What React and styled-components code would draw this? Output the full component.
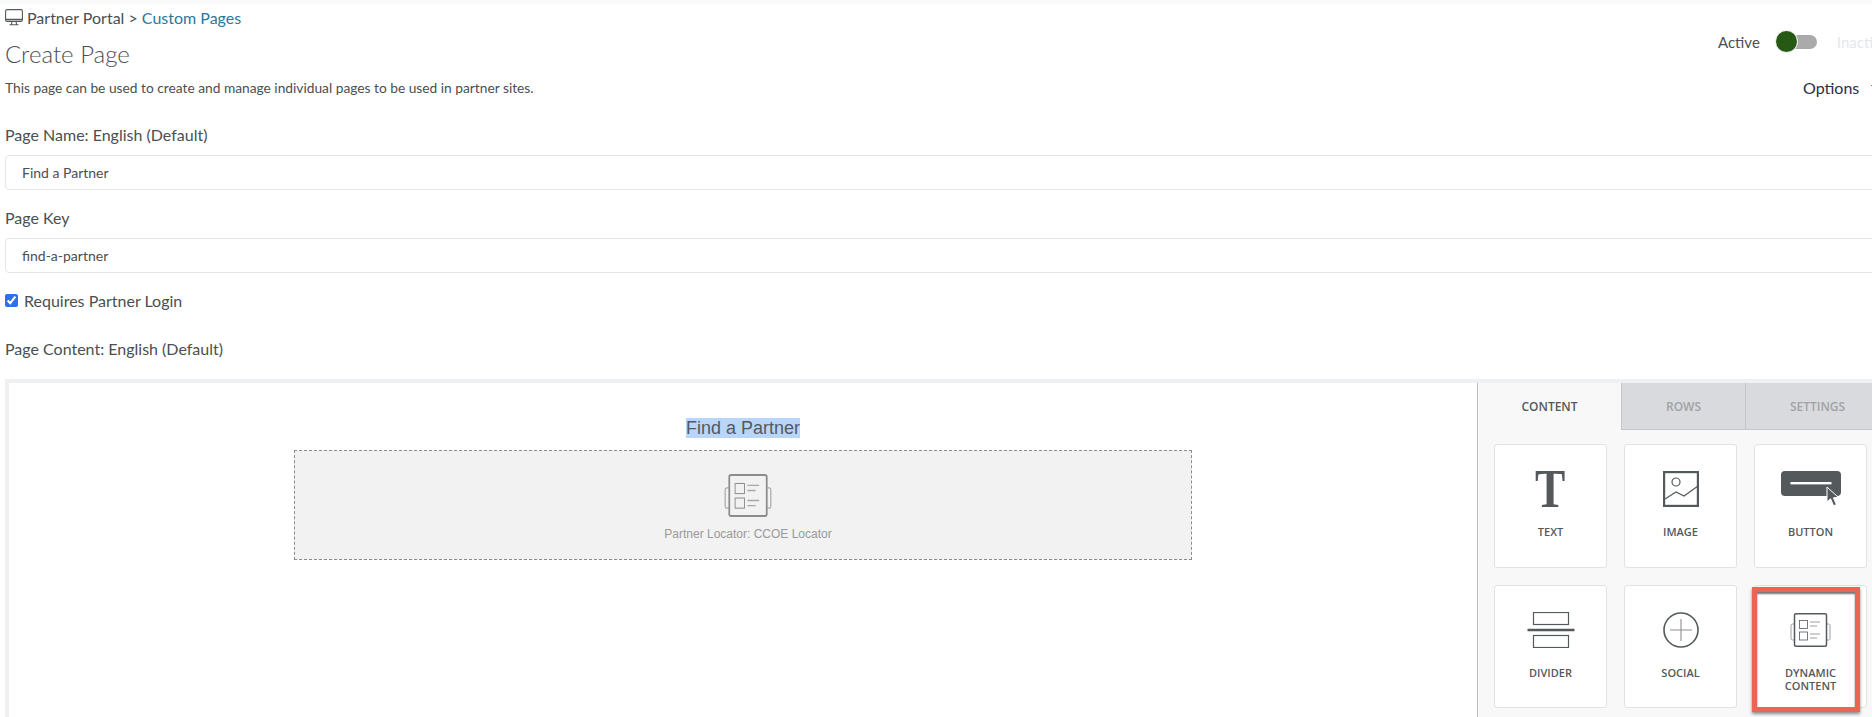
import React from "react";
import styled, { createGlobalStyle } from "styled-components";

const GlobalStyle = createGlobalStyle`
  html, body {
    margin: 0;
    height: 717px;
    overflow: hidden;
    background: #fff;
  }
  * {
    box-sizing: border-box;
  }
`;

const Page = styled.div`
  width: 1930px;
  height: 717px;
  overflow: hidden;
  font-family: Lato, "Liberation Sans", sans-serif;
  color: #4a4f52;
`;

const TopStrip = styled.div`
  height: 4px;
  background: #f9f9f9;
`;

const Main = styled.div`
  padding-left: 5px;
`;

const Header = styled.header`
  display: flex;
  justify-content: space-between;
  height: 121px;
`;

const Breadcrumb = styled.div`
  display: flex;
  align-items: center;
  gap: 4px;
  height: 24px;
  margin-top: 1px;
  font-size: 16px;
  white-space: pre;
`;

const CrumbLink = styled.a`
  color: #2a789f;
`;

const Title = styled.h1`
  margin: 10px 0 0;
  font-size: 24px;
  line-height: 30px;
  font-weight: 300;
  color: #4a4f52;
`;

const Description = styled.p`
  margin: 10px 0 0;
  font-size: 13.75px;
  line-height: 18px;
`;

const HeaderRight = styled.div`
  display: flex;
  flex-direction: column;
  align-items: flex-start;
  width: 212px;
  padding-top: 25px;
`;

const Status = styled.div`
  display: flex;
  align-items: center;
  height: 26px;
  font-size: 15px;
`;

const Toggle = styled.span`
  position: relative;
  display: block;
  width: 41px;
  height: 14px;
  margin: 0 20px 0 16px;
  border-radius: 7px;
  background: #aaa;
  &::before {
    content: "";
    position: absolute;
    left: 0;
    top: -4px;
    width: 21px;
    height: 21px;
    border-radius: 50%;
    background: #265a14;
    box-shadow: 0 0 0 1px #eee;
  }
`;

const InactiveText = styled.span`
  color: #e2e8ee;
`;

const Options = styled.div`
  display: flex;
  align-items: center;
  gap: 12px;
  margin: 23px 0 0 85px;
  font-size: 16px;
  color: #2b2f45;
`;

const Caret = styled.span`
  width: 0;
  height: 0;
  border-left: 4px solid transparent;
  border-right: 4px solid transparent;
  border-top: 5px solid #2b2f45;
`;

const FieldLabel = styled.label`
  display: block;
  font-size: 16px;
  line-height: 20px;
  margin-bottom: 10px;
`;

const TextInput = styled.input`
  display: block;
  width: 100%;
  height: 35px;
  padding: 0 16px;
  margin-bottom: ${(p) => p.$gap}px;
  border: 1px solid #e2e6e8;
  border-radius: 4px;
  background: #fff;
  font: 14px Lato, "Liberation Sans", sans-serif;
  color: #4a4f52;
  outline: none;
`;

const CheckRow = styled.label`
  display: flex;
  align-items: center;
  gap: 6px;
  height: 20px;
  margin: -2px 0 29px;
  font-size: 16px;
`;

const CheckBox = styled.input`
  width: 13px;
  height: 13px;
  margin: 1px 0 0;
  accent-color: #2f6fed;
`;

const Editor = styled.section`
  display: flex;
  height: 345px;
  margin-top: 20px;
  border: 4px solid #eef0f1;
  border-bottom: 0;
  border-right: 0;
`;

const Canvas = styled.div`
  width: 1468px;
  flex: none;
  display: flex;
  flex-direction: column;
  align-items: center;
  padding-top: 35px;
  font-family: "Liberation Sans", Arial, sans-serif;
`;

const CanvasTitle = styled.div`
  font-size: 18px;
  line-height: 20px;
  color: #54595c;
  background: #b9d6f9;
`;

const LocatorBlock = styled.div`
  display: flex;
  flex-direction: column;
  align-items: center;
  width: 898px;
  height: 110px;
  margin-top: 12px;
  padding: 23px 0 0 10px;
  border: 1px dashed #8c8c8c;
  background: #f2f2f2;
`;

const LocatorText = styled.div`
  margin-top: 10px;
  font-size: 12px;
  line-height: 14px;
  color: #999;
`;

const Sidebar = styled.aside`
  width: 412px;
  flex: none;
  border-left: 1px solid #bdbdbd;
  background: #f8f8f8;
`;

const Tabs = styled.div`
  display: flex;
  height: 47px;
`;

const Tab = styled.div`
  display: flex;
  align-items: center;
  justify-content: center;
  width: ${(p) => p.$width}px;
  font: 600 12px "Open Sans", sans-serif;
  color: ${(p) => (p.$active ? "#54595c" : "#a0a3a6")};
  background: ${(p) => (p.$active ? "transparent" : "#d8dade")};
  border-bottom: ${(p) => (p.$active ? "0" : "1px solid #c4c6c9")};
  border-left: ${(p) => (p.$active ? "0" : "1px solid #c4c6c9")};
`;

const CardGrid = styled.div`
  display: grid;
  grid-template-columns: repeat(3, 113px);
  grid-auto-rows: 123.5px;
  gap: 17px;
  padding: 14px 0 0 16px;
`;

const Card = styled.div`
  position: relative;
  display: flex;
  flex-direction: column;
  align-items: center;
  padding-top: 26px;
  border: 1px solid #e2e2e2;
  border-radius: 3px;
  background: #fff;
  color: #54595c;
`;

const IconSlot = styled.div`
  display: flex;
  align-items: center;
  justify-content: center;
  height: 36px;
`;

const TextGlyph = styled.span`
  font: bold 54px/36px "Liberation Serif", serif;
  color: #54595c;
  transform: scaleX(0.84);
`;

const CardLabel = styled.div`
  margin-top: 18px;
  width: 90px;
  font: 600 11px/13px "Open Sans", sans-serif;
  text-align: center;
`;

const Highlight = styled.div`
  position: absolute;
  left: -3px;
  top: 1px;
  width: 108px;
  height: 125px;
  border: 5px solid #ec6456;
  box-shadow: inset 0 2px 2px rgba(0, 0, 0, 0.55), 0 2px 3px rgba(0, 0, 0, 0.45);
`;

const MonitorIcon = () => (
  <svg width="18" height="17" viewBox="0 0 18 17" fill="none" stroke="#54595c" strokeWidth="1.1">
    <rect x="0.6" y="0.6" width="16.800" height="11.800" rx="1.500" />
    <path d="M0.6 10.500h16.800" strokeWidth="1.500" />
    <path d="M7 12.500l-.6 3M11 12.500l.6 3M4.500 15.700h9" />
  </svg>
);

const ImageIcon = () => (
  <svg width="36" height="36" viewBox="0 0 36 36" fill="none" stroke="#54595c">
    <rect x="1" y="1" width="34" height="34" strokeWidth="2.4" />
    <circle cx="13" cy="11" r="4" strokeWidth="1.2" />
    <path d="M2 28l11-7 8 4 14-10" strokeWidth="1.2" />
  </svg>
);

const ButtonIcon = () => (
  <svg width="60" height="36" viewBox="0 0 60 36">
    <rect width="60" height="25" rx="4" fill="#54595c" />
    <rect x="9.5" y="11" width="41" height="2.4" fill="#fff" />
    <path d="M46 16v15l3.6-3.2 3 7 2.8-1.2-3-6.8 5-.4z" fill="#54595c" stroke="#fff" strokeWidth="1" />
  </svg>
);

const DividerIcon = () => (
  <svg width="48" height="36" viewBox="0 0 48 36" fill="none" stroke="#54595c">
    <rect x="6.5" y="0.5" width="35" height="12" strokeWidth="1.2" />
    <path d="M0.5 18h47" strokeWidth="2.6" />
    <rect x="6.5" y="23.5" width="35" height="12" strokeWidth="1.2" />
  </svg>
);

const SocialIcon = () => (
  <svg width="36" height="36" viewBox="0 0 36 36" fill="none">
    <circle cx="18" cy="18" r="17" stroke="#54595c" strokeWidth="1.6" />
    <path d="M18 7v22M7 18h22" stroke="#8c9093" strokeWidth="1.1" />
  </svg>
);

const DynamicIcon = ({ width, height, main = "#54595c", soft = "#9a9d9f" }) => (
  <svg width={width} height={height} viewBox="0 0 41 34" preserveAspectRatio="none" fill="none">
    <path d="M4 11H2.500A1.500 1.500 0 0 0 1 12.500v13A1.500 1.500 0 0 0 2.500 27H4" stroke={soft} />
    <path d="M37 11h1.500a1.500 1.500 0 0 1 1.500 1.500v13a1.500 1.500 0 0 1-1.500 1.500H37" stroke={soft} />
    <rect x="4.500" y="0.800" width="32" height="32.400" rx="1.500" stroke={main} strokeWidth="1.500" />
    <rect x="9.500" y="7.500" width="8" height="8" stroke={main} strokeWidth="0.800" />
    <rect x="9.500" y="19" width="8" height="8" stroke={main} strokeWidth="0.800" />
    <path d="M20 9h10M20 13h7M20 21h10M20 25h7" stroke={soft} strokeWidth="1.100" />
  </svg>
);

const tabs = [
  { label: "CONTENT", width: 143, active: true },
  { label: "ROWS", width: 124 },
  { label: "SETTINGS", width: 144 },
];

const blocks = [
  { label: "TEXT", icon: <TextGlyph>T</TextGlyph> },
  { label: "IMAGE", icon: <ImageIcon /> },
  { label: "BUTTON", icon: <ButtonIcon /> },
  { label: "DIVIDER", icon: <DividerIcon /> },
  { label: "SOCIAL", icon: <SocialIcon /> },
  { label: "DYNAMIC CONTENT", icon: <DynamicIcon width={41} height={34} />, marked: true },
];

export default function App() {
  return (
    <Page>
      <GlobalStyle />
      <TopStrip />
      <Main>
        <Header>
          <div>
            <Breadcrumb>
              <MonitorIcon />
              <span>
                Partner Portal {">"} <CrumbLink>Custom Pages</CrumbLink>
              </span>
            </Breadcrumb>
            <Title>Create Page</Title>
            <Description>
              This page can be used to create and manage individual pages to be used in partner sites.
            </Description>
          </div>
          <HeaderRight>
            <Status>
              Active
              <Toggle />
              <InactiveText>Inactive</InactiveText>
            </Status>
            <Options>
              Options
              <Caret />
            </Options>
          </HeaderRight>
        </Header>

        <FieldLabel>Page Name: English (Default)</FieldLabel>
        <TextInput readOnly value="Find a Partner" $gap={18} />
        <FieldLabel>Page Key</FieldLabel>
        <TextInput readOnly value="find-a-partner" $gap={19} />
        <CheckRow>
          <CheckBox type="checkbox" readOnly checked />
          Requires Partner Login
        </CheckRow>
        <FieldLabel>Page Content: English (Default)</FieldLabel>

        <Editor>
          <Canvas>
            <CanvasTitle>Find a Partner</CanvasTitle>
            <LocatorBlock>
              <DynamicIcon width={48} height={43} main="#8c8c8c" soft="#a8a8a8" />
              <LocatorText>Partner Locator: CCOE Locator</LocatorText>
            </LocatorBlock>
          </Canvas>
          <Sidebar>
            <Tabs>
              {tabs.map((tab) => (
                <Tab key={tab.label} $width={tab.width} $active={tab.active}>
                  {tab.label}
                </Tab>
              ))}
            </Tabs>
            <CardGrid>
              {blocks.map((block) => (
                <Card key={block.label}>
                  <IconSlot>{block.icon}</IconSlot>
                  <CardLabel>{block.label}</CardLabel>
                  {block.marked && <Highlight />}
                </Card>
              ))}
            </CardGrid>
          </Sidebar>
        </Editor>
      </Main>
    </Page>
  );
}
